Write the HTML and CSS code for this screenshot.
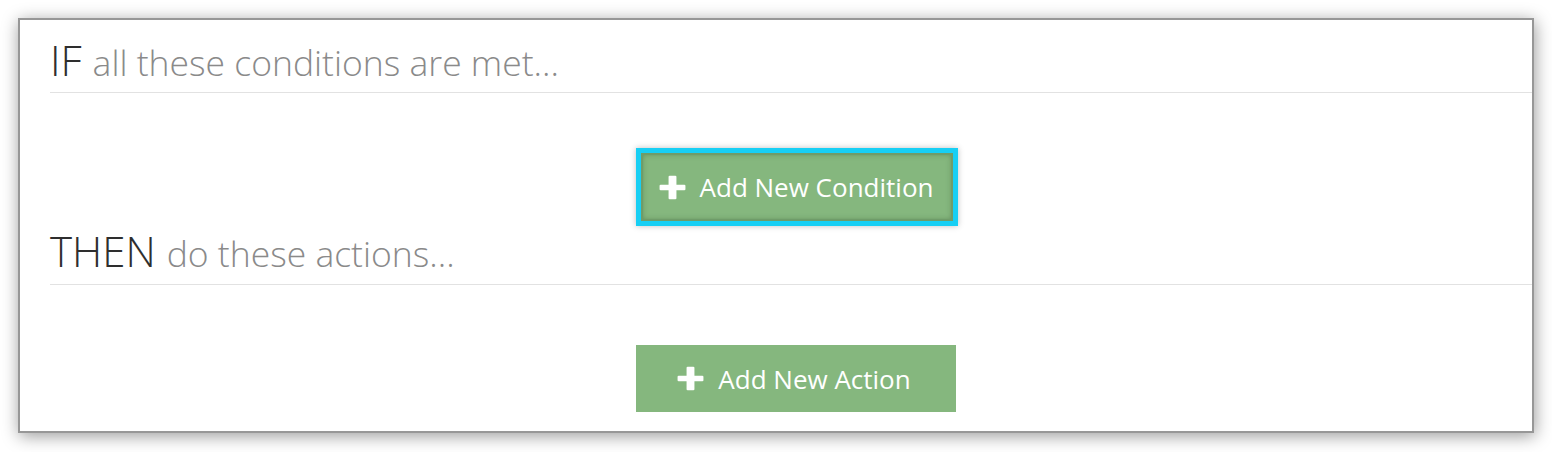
FILE: index.html
```html
<!DOCTYPE html>
<html lang="en">
<head>
<meta charset="utf-8">
<title>Rule builder</title>
<link rel="stylesheet" href="styles.css">
</head>
<body>
<div class="panel">
  <h2 class="heading"><span class="kw">IF</span> <span class="sub">all these conditions are met...</span></h2>
  <div class="btn-row">
    <div class="highlight">
      <button class="btn btn-inset" type="button">
        <svg class="plus" viewBox="0 0 24 24" aria-hidden="true"><path d="M9.5 1.5h5a1 1 0 0 1 1 1v7h7a1 1 0 0 1 1 1v3a1 1 0 0 1-1 1h-7v7a1 1 0 0 1-1 1h-5a1 1 0 0 1-1-1v-7h-7a1 1 0 0 1-1-1v-3a1 1 0 0 1 1-1h7v-7a1 1 0 0 1 1-1z"/></svg>
        <span>Add New Condition</span>
      </button>
    </div>
  </div>
  <h2 class="heading heading-then"><span class="kw">THEN</span> <span class="sub">do these actions...</span></h2>
  <div class="btn-row btn-row-last">
    <button class="btn" type="button">
      <svg class="plus" viewBox="0 0 24 24" aria-hidden="true"><path d="M9.5 1.5h5a1 1 0 0 1 1 1v7h7a1 1 0 0 1 1 1v3a1 1 0 0 1-1 1h-7v7a1 1 0 0 1-1 1h-5a1 1 0 0 1-1-1v-7h-7a1 1 0 0 1-1-1v-3a1 1 0 0 1 1-1h7v-7a1 1 0 0 1 1-1z"/></svg>
      <span>Add New Action</span>
    </button>
  </div>
</div>
</body>
</html>
```

FILE: styles.css
```css
html, body {
  margin: 0;
  padding: 0;
  background: #ffffff;
}

body {
  font-family: "Open Sans", "Liberation Sans", sans-serif;
  padding: 18px 0 0 18px;
  height: 452px;
  box-sizing: border-box;
  overflow: hidden;
}

.panel {
  width: 1516px;
  box-sizing: border-box;
  border: 2px solid #979797;
  background: #ffffff;
  padding: 15px 0 19px 30px;
  box-shadow: 1px 3px 16px rgba(0, 0, 0, 0.4);
}

.heading {
  margin: 0;
  padding: 0 0 7px 0;
  font-size: 42px;
  line-height: 50px;
  font-weight: 300;
  border-bottom: 1px solid #e2e2e2;
  white-space: nowrap;
}

.heading-then {
  padding-bottom: 8px;
}

.kw {
  color: #2e2e2e;
  font-weight: 300;
}

.sub {
  color: #8a8a8a;
  font-size: 35.5px;
  line-height: 30px;
  font-weight: 300;
}

.btn-row {
  display: flex;
  justify-content: center;
  padding-left: 10px;
  margin-top: 55px;
}

.btn-row-last {
  margin-top: 60px;
}

.highlight {
  border: 5px solid #17cff4;
  margin-left: 2px;
  box-shadow: 0 0 6px rgba(0, 0, 0, 0.25);
  display: flex;
}

.btn {
  display: flex;
  align-items: center;
  justify-content: center;
  gap: 14px;
  width: 320px;
  height: 67px;
  border: 0;
  margin: 0;
  padding: 0 4px 0 0;
  background: #85b77e;
  color: #ffffff;
  font-family: "Open Sans", "Liberation Sans", sans-serif;
  font-size: 26px;
  font-weight: 400;
  cursor: pointer;
}

.btn-inset {
  width: 312px;
  height: 68px;
  padding: 0 2px 0 0;
  box-shadow: inset 0 0 0 2px #6f9c69, inset 0 0 6px rgba(40, 70, 35, 0.55);
}

.plus {
  width: 27px;
  height: 27px;
  fill: #ffffff;
  flex: none;
}
```
